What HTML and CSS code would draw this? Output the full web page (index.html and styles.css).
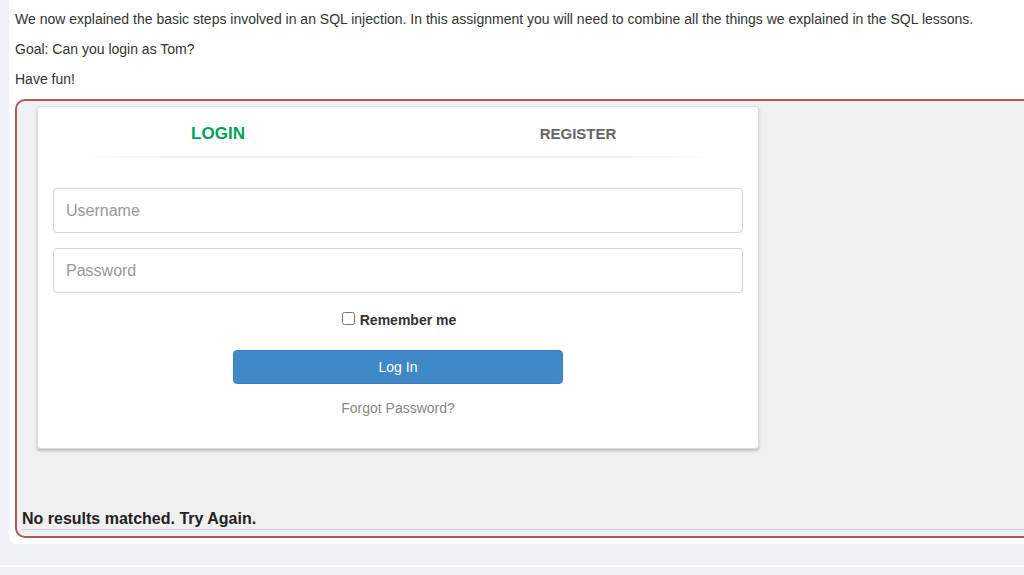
FILE: index.html
```html
<!DOCTYPE html>
<html>
<head>
<meta charset="utf-8">
<link rel="stylesheet" href="styles.css">
</head>
<body>
<div class="panel">
  <p>We now explained the basic steps involved in an SQL injection. In this assignment you will need to combine all the things we explained in the SQL lessons.</p>
  <p>Goal: Can you login as Tom?</p>
  <p>Have fun!</p>
  <div class="attack">
    <div class="card">
      <div class="tabs">
        <div class="tab tab-active">LOGIN</div>
        <div class="tab">REGISTER</div>
      </div>
      <div class="tab-rule"></div>
      <form class="form">
        <input class="field" type="text" placeholder="Username">
        <input class="field" type="password" placeholder="Password">
        <label class="remember"><input type="checkbox" class="check"> Remember me</label>
        <button type="button" class="btn">Log In</button>
        <div class="forgot">Forgot Password?</div>
      </form>
    </div>
    <div class="feedback">No results matched. Try Again.</div>
    <div class="feedback-rule"></div>
  </div>
</div>
<div class="footer"></div>
</body>
</html>
```
FILE: styles.css
```css
html, body {
  margin: 0;
  padding: 0;
  overflow: hidden;
  height: 575px;
}
body {
  background: #eff1f6;
  font-family: "Liberation Sans", Arial, sans-serif;
  font-size: 14px;
  line-height: 20px;
  color: #333;
}
.panel {
  margin-left: 9px;
  background: #fff;
  padding: 9px 0 6px 6px;
  border-bottom-left-radius: 6px;
  overflow: hidden;
}
.panel p {
  margin: 0 0 10px;
  white-space: nowrap;
}
.attack {
  width: 1040px;
  border: 2px solid #a85c5c;
  border-radius: 10px;
  background: #f0f0f0;
  padding: 5px 0 6px 0;
}
.card {
  margin-left: 20px;
  width: 722px;
  background: #fff;
  border: 1px solid #dcdcdc;
  border-radius: 3px;
  box-shadow: 0 2px 3px rgba(0, 0, 0, 0.22);
  box-sizing: border-box;
  height: 343px;
}
.tabs {
  display: flex;
  padding-top: 17px;
}
.tab {
  flex: 1;
  text-align: center;
  font-weight: bold;
  font-size: 15px;
  line-height: 20px;
  color: #666;
}
.tab-active {
  color: #029f5b;
  font-size: 17px;
}
.tab-rule {
  margin: 12px 45px 0 42px;
  height: 2px;
  background: linear-gradient(to right, rgba(0,0,0,0), rgba(0,0,0,0.06) 15%, rgba(0,0,0,0.06) 85%, rgba(0,0,0,0));
}
.form {
  display: flex;
  flex-direction: column;
  align-items: center;
  padding: 30px 15px 0 15px;
  margin: 0;
}
.field {
  display: block;
  width: 100%;
  box-sizing: border-box;
  height: 45px;
  margin: 0 0 15px;
  padding: 0 12px;
  border: 1px solid #d6d6d6;
  border-radius: 4px;
  font-family: "Liberation Sans", Arial, sans-serif;
  font-size: 16px;
  color: #555;
  background: #fff;
  outline: none;
}
.field::placeholder {
  color: #999;
}
.remember {
  display: flex;
  align-items: center;
  margin-top: 2px;
  margin-left: 2px;
  font-weight: bold;
  color: #333;
  line-height: 20px;
}
.check {
  margin: 0 5px 0 0;
  width: 13px;
  height: 13px;
  position: relative;
  top: -2px;
}
.btn {
  margin-top: 20px;
  width: 330px;
  height: 34px;
  background: #3f89c9;
  border: 1px solid #3a80be;
  border-radius: 4px;
  color: #fff;
  font-family: "Liberation Sans", Arial, sans-serif;
  font-size: 14px;
  padding: 0;
}
.forgot {
  margin-top: 14px;
  color: #888;
  line-height: 20px;
}
.feedback {
  margin-top: 61px;
  padding-left: 5px;
  font-weight: bold;
  font-size: 16px;
  line-height: 18px;
  color: #222;
}
.feedback-rule {
  margin-left: 5px;
  margin-top: 1px;
  border-top: 1px solid #cfcfcf;
}
.footer {
  margin-top: 21px;
  border-top: 2px solid #fff;
}
```
